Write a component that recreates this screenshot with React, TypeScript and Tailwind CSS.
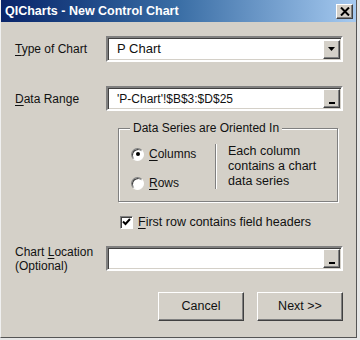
import React from "react";

const font = { fontFamily: '"Liberation Sans", Arial, sans-serif' };

function Sunken({ children, className = "" }: { children?: React.ReactNode; className?: string }) {
  return (
    <div
      className={
        "flex items-center bg-white border-2 border-t-[#808080] border-l-[#808080] border-b-white border-r-white shadow-[inset_1px_1px_0_#404040,inset_-1px_-1px_0_#d4d0c8] " +
        className
      }
    >
      {children}
    </div>
  );
}

function SmallBtn({ children }: { children: React.ReactNode }) {
  return (
    <div className="ml-auto mr-[1px] w-[17px] h-[19px] bg-[#d4d0c8] border border-t-white border-l-white border-b-[#404040] border-r-[#404040] shadow-[inset_-1px_-1px_0_#808080] flex items-center justify-center">
      {children}
    </div>
  );
}

export default function App() {
  return (
    <div className="w-[360px] h-[340px] bg-[#e6e6e6]" style={font}>
      <div className="w-[357px] h-[338px] bg-[#d4d0c8] border-r border-b border-[#555] border-l border-l-[#f0f0f0] flex flex-col">
        <div className="h-[22px] flex items-center justify-between pl-[4px] pr-[3px] bg-gradient-to-r from-[#0a246a] via-[#3a6ea5] to-[#a6caf0]">
          <span className="text-white font-bold text-[12.5px]">QICharts - New Control Chart</span>
          <div className="w-[17px] h-[15px] bg-[#d4d0c8] border border-t-white border-l-white border-b-[#404040] border-r-[#404040] shadow-[inset_-1px_-1px_0_#808080] flex items-center justify-center">
            <svg width="10" height="9" viewBox="0 0 10 9">
              <path d="M1 0.5 L9 8.5 M9 0.5 L1 8.5" stroke="#000" strokeWidth="2" />
            </svg>
          </div>
        </div>

        <div className="flex flex-col pl-[14px] pr-[13px] text-[12px] text-[#111]">
          <div className="flex items-center mt-[14px] h-[26px]">
            <span className="w-[91px]"><span className="underline underline-offset-2">T</span>ype of Chart</span>
            <Sunken className="flex-1 h-[26px]">
              <span className="pl-[9px] text-[13px]">P Chart</span>
              <SmallBtn>
                <svg width="7" height="4" viewBox="0 0 7 4"><path d="M0 0 H7 L3.5 4 Z" fill="#000" /></svg>
              </SmallBtn>
            </Sunken>
          </div>

          <div className="flex items-center mt-[24px] h-[25px]">
            <span className="w-[91px]"><span className="underline underline-offset-2">D</span>ata Range</span>
            <Sunken className="flex-1 h-[25px]">
              <span className="pl-[9px] text-[12px]">'P-Chart'!$B$3:$D$25</span>
              <SmallBtn>
                <div className="w-[6px] h-[2px] bg-black mt-[8px]" />
              </SmallBtn>
            </Sunken>
          </div>

          <div className="ml-[103px] mr-[5px] mt-[17px] relative border border-[#808080] shadow-[1px_1px_0_#fff,inset_1px_1px_0_#fff] h-[74px] flex items-center">
            <span className="absolute -top-[9px] left-[11px] bg-[#d4d0c8] px-[3px] leading-[16px]">Data Series are Oriented In</span>
            <div className="flex flex-col gap-[11px] pl-[12px] w-[96px] mt-[7px]">
              <div className="flex items-center gap-[5px]">
                <span className="w-[13px] h-[13px] rounded-full bg-white border border-t-[#808080] border-l-[#808080] border-b-white border-r-white shadow-[inset_1px_1px_0_#404040] flex items-center justify-center">
                  <span className="w-[4px] h-[4px] rounded-full bg-black" />
                </span>
                <span><span className="underline underline-offset-2">C</span>olumns</span>
              </div>
              <div className="flex items-center gap-[5px]">
                <span className="w-[13px] h-[13px] rounded-full bg-white border border-t-[#808080] border-l-[#808080] border-b-white border-r-white shadow-[inset_1px_1px_0_#404040]" />
                <span><span className="underline underline-offset-2">R</span>ows</span>
              </div>
            </div>
            <div className="w-[2px] h-[45px] border-l border-[#808080] border-r border-r-white mt-[3px]" />
            <div className="pl-[11px] leading-[15px] mt-[3px] text-[12.5px]">
              Each column<br />contains a chart<br />data series
            </div>
          </div>

          <div className="flex items-center ml-[105px] mt-[11px] gap-[5px]">
            <span className="w-[13px] h-[13px] bg-white border border-t-[#808080] border-l-[#808080] border-b-white border-r-white shadow-[inset_1px_1px_0_#404040] flex items-center justify-center">
              <svg width="9" height="8" viewBox="0 0 9 8"><path d="M1 3.5 L3.5 6 L8 1" stroke="#000" strokeWidth="2" fill="none" /></svg>
            </span>
            <span className="text-[12.5px]"><span className="underline underline-offset-2">F</span>irst row contains field headers</span>
          </div>

          <div className="flex items-center mt-[13px]">
            <span className="w-[91px] leading-[14px]">Chart <span className="underline underline-offset-2">L</span>ocation<br />(Optional)</span>
            <Sunken className="flex-1 h-[25px]">
              <SmallBtn>
                <div className="w-[6px] h-[2px] bg-black mt-[8px]" />
              </SmallBtn>
            </Sunken>
          </div>

          <div className="flex justify-end gap-[13px] mt-[19px]">
            <button className="w-[86px] h-[29px] bg-[#d4d0c8] border border-t-white border-l-white border-b-[#404040] border-r-[#404040] shadow-[inset_-1px_-1px_0_#808080] text-[12.5px]">Cancel</button>
            <button className="w-[86px] h-[29px] bg-[#d4d0c8] border border-t-white border-l-white border-b-[#404040] border-r-[#404040] shadow-[inset_-1px_-1px_0_#808080] text-[12.5px]">Next &gt;&gt;</button>
          </div>
        </div>
      </div>
    </div>
  );
}
